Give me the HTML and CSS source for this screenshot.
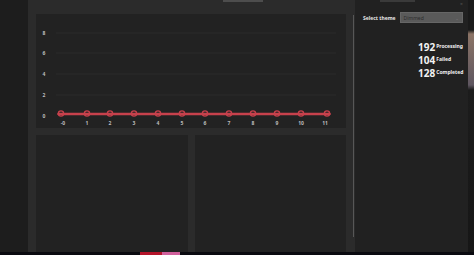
FILE: index.html
```html
<!DOCTYPE html>
<html>
<head>
  <meta charset="UTF-8" />
  <link rel="stylesheet" href="styles.css">
</head>
<body>
  <div class="app">
    <div class="rail"></div>

    <div class="main">
      <span class="tab tab-main"></span>
      <div class="chart">
        <svg width="310" height="114" viewBox="0 0 310 114">
          <g class="grid">
            <line x1="20" y1="19" x2="300" y2="19" />
            <line x1="20" y1="39" x2="300" y2="39" />
            <line x1="20" y1="60" x2="300" y2="60" />
            <line x1="20" y1="81" x2="300" y2="81" />
          </g>
          <g class="ylab">
            <text x="8" y="21">8</text>
            <text x="8" y="41">6</text>
            <text x="8" y="62">4</text>
            <text x="8" y="83">2</text>
            <text x="8" y="104">0</text>
          </g>
          <g class="marks">
            <circle cx="25" cy="99.5" r="2.6" />
            <circle cx="51" cy="99.5" r="2.6" />
            <circle cx="74" cy="99.5" r="2.6" />
            <circle cx="98" cy="99.5" r="2.6" />
            <circle cx="122" cy="99.5" r="2.6" />
            <circle cx="146" cy="99.5" r="2.6" />
            <circle cx="169" cy="99.5" r="2.6" />
            <circle cx="193" cy="99.5" r="2.6" />
            <circle cx="217" cy="99.5" r="2.6" />
            <circle cx="241" cy="99.5" r="2.6" />
            <circle cx="265" cy="99.5" r="2.6" />
            <circle cx="291" cy="99.5" r="2.6" />
          </g>
          <line class="series" x1="22.5" y1="100" x2="293.5" y2="100" />
          <g class="xlab">
            <text x="27" y="111">-0</text>
            <text x="51" y="111">1</text>
            <text x="74" y="111">2</text>
            <text x="98" y="111">3</text>
            <text x="122" y="111">4</text>
            <text x="146" y="111">5</text>
            <text x="169" y="111">6</text>
            <text x="193" y="111">7</text>
            <text x="217" y="111">8</text>
            <text x="241" y="111">9</text>
            <text x="265" y="111">10</text>
            <text x="289" y="111">11</text>
          </g>
        </svg>
      </div>
      <div class="panels">
        <div class="panel"></div>
        <div class="panel"></div>
      </div>
    </div>

    <div class="divider"><div class="divider-line"></div></div>

    <div class="side">
      <span class="tab tab-side"></span>
      <div class="controls">
        <span class="dot"></span><span class="dot"></span><span class="dot">×</span>
      </div>
      <div class="theme-row">
        <label class="theme-label">Select theme</label>
        <div class="select">Dimmed <span class="chev">⌄</span></div>
      </div>
      <div class="stats">
        <div class="stat"><b>192</b><span>Processing</span></div>
        <div class="stat"><b>104</b><span>Failed</span></div>
        <div class="stat"><b>128</b><span>Completed</span></div>
      </div>
    </div>

    <div class="edge"></div>
  </div>

  <div class="taskbar">
    <span class="task red"></span><span class="task pink"></span>
  </div>
</body>
</html>
```

FILE: styles.css
```css
body {
    margin: 0;
    width: 474px;
    height: 255px;
    overflow: hidden;
    background-color: #2a2a2a;
    font-family: "Noto Sans", "Open Sans", sans-serif;
}

.app {
    display: flex;
    height: 252px;
}

.rail {
    width: 28px;
    background-color: #1d1d1d;
}

.main {
    position: relative;
    width: 324px;
    padding: 14px 6px 0 8px;
    box-sizing: border-box;
    background-color: #2b2b2b;
    display: flex;
    flex-direction: column;
    gap: 7px;
}

.tab {
    position: absolute;
    top: 0;
    height: 2px;
    background-color: #4d4d4d;
}

.tab-main {
    left: 195px;
    width: 40px;
}

.chart {
    height: 114px;
    background-color: #222222;
}

.chart svg {
    display: block;
}

.grid line {
    stroke: #2b2b2b;
    stroke-width: 1;
}

.ylab text,
.xlab text {
    fill: #bdbdbd;
    font-size: 5px;
    font-weight: bold;
    text-anchor: middle;
}

.series {
    stroke: #c7414c;
    stroke-width: 2.6;
    stroke-linecap: round;
}

.marks circle {
    fill: #222222;
    stroke: #c7414c;
    stroke-width: 1.4;
}

.panels {
    flex: 1;
    display: flex;
    gap: 7px;
}

.panel {
    flex: 1;
    background-color: #222222;
}

.divider {
    width: 3px;
    background-color: #2b2b2b;
    padding-top: 15px;
    box-sizing: border-box;
}

.divider-line {
    margin-left: 1px;
    width: 1px;
    height: 222px;
    background-color: #575757;
}

.side {
    position: relative;
    width: 113px;
    background-color: #212121;
    padding: 12px 5px 0 8px;
    box-sizing: border-box;
}

.tab-side {
    left: 25px;
    width: 35px;
    background-color: #3a3a3a;
}

.controls {
    position: absolute;
    top: 2px;
    right: 3px;
    display: flex;
    gap: 6px;
    font-size: 5px;
    color: #555;
}

.dot {
    width: 5px;
    height: 5px;
    line-height: 5px;
}

.theme-row {
    display: flex;
    align-items: center;
    gap: 4px;
}

.theme-label {
    color: #e6e6e6;
    font-size: 5px;
    font-weight: bold;
    white-space: nowrap;
}

.select {
    flex: 1;
    height: 11px;
    line-height: 11px;
    padding: 0 3px;
    background-color: #5a5a5a;
    border: 1px solid #666;
    box-sizing: border-box;
    color: #2c2c2c;
    font-size: 5px;
    display: flex;
    justify-content: space-between;
}

.chev {
    color: #777;
}

.stats {
    margin-top: 19px;
    padding-left: 55px;
    display: flex;
    flex-direction: column;
    gap: 1px;
}

.stat {
    display: flex;
    align-items: flex-start;
    gap: 1px;
    height: 12px;
    color: #f2f2f2;
}

.stat b {
    font-size: 10px;
    line-height: 11px;
}

.stat span {
    font-size: 5px;
    font-weight: bold;
    line-height: 8px;
}

.edge {
    width: 6px;
    background: linear-gradient(#1a1a1a 0, #1a1a1a 30px, #8c7466 34px, #5e5660 85px, #1c1c1c 90px, #161616 100%);
}

.taskbar {
    height: 3px;
    background-color: #0a0a10;
    display: flex;
    padding-left: 140px;
}

.task {
    height: 3px;
}

.red {
    width: 22px;
    background-color: #b3142a;
}

.pink {
    width: 18px;
    background-color: #d0609c;
}
```
